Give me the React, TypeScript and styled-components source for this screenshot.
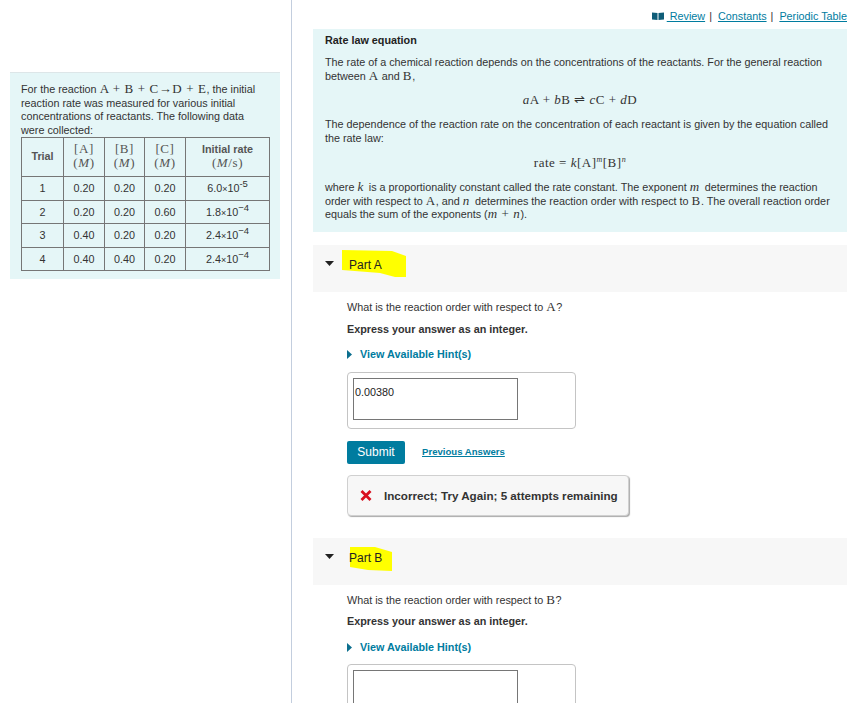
import styled, { createGlobalStyle } from "styled-components";

const teal = "#007c9f";

const GlobalStyle = createGlobalStyle`
  html, body {
    margin: 0;
    padding: 0;
    height: 703px;
    overflow: hidden;
    background: #fff;
    font-family: "Liberation Sans", Arial, sans-serif;
    color: #333;
  }
`;

const rows = [
  { trial: 1, a: "0.20", b: "0.20", c: "0.20", base: "6.0", exp: "-5", h: 24 },
  { trial: 2, a: "0.20", b: "0.20", c: "0.60", base: "1.8", exp: "−4", h: 23 },
  { trial: 3, a: "0.40", b: "0.20", c: "0.20", base: "2.4", exp: "−4", h: 24 },
  { trial: 4, a: "0.40", b: "0.40", c: "0.20", base: "2.4", exp: "−4", h: 23 },
];

function BookIcon() {
  return (
    <svg width="12" height="8" viewBox="0 0 12 8">
      <path d="M0 0.5 L5.5 1 V8 L0 7.5 Z M12 0.5 L6.5 1 V8 L12 7.5 Z" fill="#0f5d78" />
    </svg>
  );
}

function Caret() {
  return (
    <svg width="9" height="5" viewBox="0 0 9 5">
      <polygon points="0,0 9,0 4.5,5" fill="#222" />
    </svg>
  );
}

function HintCaret() {
  return (
    <svg width="5" height="9" viewBox="0 0 5 9">
      <polygon points="0,0 5,4.5 0,9" fill="#0c6f8e" />
    </svg>
  );
}

function CrossIcon() {
  return (
    <svg width="12" height="11" viewBox="0 0 12 11">
      <path d="M1.5 1 L10.5 10 M10.5 1 L1.5 10" stroke="#d9101f" strokeWidth="2.8" fill="none" />
    </svg>
  );
}

const markers = {
  A: { left: -7, top: -5, w: 64, h: 27, points: "0,0 50,1 64,6 64,27 53,27 38,23 0,20" },
  B: { left: 1, top: -1, w: 42, h: 24, points: "0,0 25,0 42,5 42,24 18,23 0,20" },
};

function Part({ letter, value, open }: { letter: "A" | "B"; value?: string; open?: boolean }) {
  const m = markers[letter];
  return (
    <>
      <PartHeader>
        <Caret />
        <PartName>
          <Marker $left={m.left} $top={m.top} width={m.w} height={m.h} viewBox={`0 0 ${m.w} ${m.h}`}>
            <polygon points={m.points} fill="#ffff00" />
          </Marker>
          <PartLabel>Part {letter}</PartLabel>
        </PartName>
      </PartHeader>
      <PartBody $open={open}>
        <Question $open={open}>
          What is the reaction order with respect to <Mq>{letter}</Mq>?
        </Question>
        <Instruction $open={open}>Express your answer as an integer.</Instruction>
        <HintLink>
          <HintCaret />
          View Available Hint(s)
        </HintLink>
        <AnswerBox $open={open}>
          <AnswerInput>{value}</AnswerInput>
        </AnswerBox>
        {open && (
          <>
            <Actions>
              <SubmitButton>Submit</SubmitButton>
              <PreviousLink>Previous Answers</PreviousLink>
            </Actions>
            <Feedback>
              <CrossIcon />
              Incorrect; Try Again; 5 attempts remaining
            </Feedback>
          </>
        )}
      </PartBody>
    </>
  );
}

export default function App() {
  return (
    <Page>
      <GlobalStyle />
      <LeftColumn>
        <DataCard>
          <Intro>
            For the reaction <Mq>A + B + C→D + E</Mq>, the initial reaction rate was measured for various initial concentrations of reactants. The following data were collected:
          </Intro>
          <DataTable>
            <colgroup>
              <col width="42" />
              <col width="41" />
              <col width="40" />
              <col width="41" />
              <col width="84" />
            </colgroup>
            <thead>
              <tr>
                <HeadCell>Trial</HeadCell>
                <HeadCell><Mq>[A]</Mq><br /><Mq>(<i>M</i>)</Mq></HeadCell>
                <HeadCell><Mq>[B]</Mq><br /><Mq>(<i>M</i>)</Mq></HeadCell>
                <HeadCell><Mq>[C]</Mq><br /><Mq>(<i>M</i>)</Mq></HeadCell>
                <HeadCell>Initial rate<br /><Mq>(<i>M</i>/s)</Mq></HeadCell>
              </tr>
            </thead>
            <tbody>
              {rows.map((r) => (
                <tr key={r.trial} style={{ height: r.h }}>
                  <Cell>{r.trial}</Cell>
                  <Cell>{r.a}</Cell>
                  <Cell>{r.b}</Cell>
                  <Cell>{r.c}</Cell>
                  <Cell>
                    {r.base}<Times>×</Times>10<Exp>{r.exp}</Exp>
                  </Cell>
                </tr>
              ))}
            </tbody>
          </DataTable>
        </DataCard>
      </LeftColumn>
      <RightColumn>
        <TopLinks>
          <BookIcon />
          <TopLink>&nbsp;Review</TopLink>
          <Sep>|</Sep>
          <TopLink>Constants</TopLink>
          <Sep>|</Sep>
          <TopLink>Periodic Table</TopLink>
        </TopLinks>
        <InfoBox>
          <InfoTitle>Rate law equation</InfoTitle>
          <InfoText>
            The rate of a chemical reaction depends on the concentrations of the reactants. For the general reaction between <Mq>A</Mq> and <Mq>B</Mq>,
          </InfoText>
          <Equation>
            <i>a</i>A + <i>b</i>B ⇌ <i>c</i>C + <i>d</i>D
          </Equation>
          <InfoText>
            The dependence of the reaction rate on the concentration of each reactant is given by the equation called the rate law:
          </InfoText>
          <Equation>
            rate = <i>k</i>[A]<EqSup>m</EqSup>[B]<EqSup>n</EqSup>
          </Equation>
          <InfoText>
            where <MathVar>k</MathVar> is a proportionality constant called the rate constant. The exponent <MathVar>m</MathVar> determines the reaction order with respect to <Mq>A</Mq>, and <MathVar>n</MathVar> determines the reaction order with respect to <Mq>B</Mq>. The overall reaction order equals the sum of the exponents (<Mq><i>m</i> + <i>n</i></Mq>).
          </InfoText>
        </InfoBox>
        <Part letter="A" value="0.00380" open />
        <Part letter="B" />
      </RightColumn>
    </Page>
  );
}

const Page = styled.div`
  display: grid;
  grid-template-columns: 292px 1fr;
  height: 703px;
  overflow: hidden;
`;

const LeftColumn = styled.aside`
  border-right: 1px solid #c3cede;
  padding: 72px 11px 0 10px;
`;

const DataCard = styled.section`
  background: #e5f6f7;
  border-top: 1px solid #dde6e8;
  padding: 10px 11px 11px;
  height: 185px;
`;

const Intro = styled.p`
  margin: 0 0 -1px;
  width: 240px;
  font-size: 10.8px;
  line-height: 13.7px;
  color: #333;
`;

const Mq = styled.span`
  font-family: "Liberation Serif", "Times New Roman", serif;
  font-size: 13px;
  font-weight: 400;
  line-height: 0;
  letter-spacing: 0.6px;
`;

const MathVar = styled.i`
  font-family: "Liberation Serif", "Times New Roman", serif;
  font-size: 13px;
  line-height: 0;
  letter-spacing: 0.6px;
  margin-right: 2px;
`;

const DataTable = styled.table`
  border-collapse: collapse;
  table-layout: fixed;
  width: 248px;
  height: 130px;
  border: 1px solid #767676;
`;

const HeadCell = styled.th`
  border: 1px solid #767676;
  height: 36px;
  padding: 0 0 2px;
  font-size: 10.8px;
  line-height: 14px;
  font-weight: 700;
  text-align: center;
  color: #555;
`;

const Cell = styled.td`
  border: 1px solid #767676;
  padding: 0;
  font-size: 10.8px;
  text-align: center;
  color: #333;
`;

const Times = styled.span`
  font-size: 9px;
`;

const Exp = styled.sup`
  font-size: 9.5px;
  line-height: 0;
`;

const RightColumn = styled.main`
  padding: 7px 8px 0 21px;
  min-width: 0;
`;

const TopLinks = styled.nav`
  display: flex;
  justify-content: flex-end;
  align-items: center;
  height: 18px;
  margin-bottom: 4px;
  font-size: 10.8px;
  color: #333;
`;

const TopLink = styled.a`
  color: ${teal};
  text-decoration: underline;
  margin-left: 3px;
`;

const Sep = styled.span`
  margin: 0 3px 0 4px;
`;

const InfoBox = styled.section`
  background: #e5f6f7;
  padding: 4px 12px 0;
  height: 203px;
  box-sizing: border-box;
`;

const InfoTitle = styled.h2`
  margin: 0 0 9px;
  font-size: 10.8px;
  line-height: 14px;
  font-weight: 700;
  color: #222;
`;

const InfoText = styled.p`
  margin: 0;
  font-size: 10.8px;
  line-height: 13.7px;
  color: #333;
`;

const Equation = styled.div`
  font-family: "Liberation Serif", "Times New Roman", serif;
  font-size: 13px;
  letter-spacing: 0.5px;
  line-height: 15px;
  text-align: center;
  margin: 9px 0 11px;
  color: #333;
`;

const EqSup = styled.sup`
  font-size: 8px;
  font-style: italic;
  line-height: 0;
`;

const PartHeader = styled.div`
  display: flex;
  align-items: center;
  gap: 15px;
  height: 47px;
  box-sizing: border-box;
  margin-top: 13px;
  padding: 0 0 10px 12px;
  background: #f7f7f7;
`;

const PartName = styled.div`
  position: relative;
`;

const Marker = styled.svg<{ $left: number; $top: number }>`
  position: absolute;
  left: ${({ $left }) => $left}px;
  top: ${({ $top }) => $top}px;
`;

const PartLabel = styled.span`
  position: relative;
  font-size: 12px;
  color: #222;
`;

const PartBody = styled.div<{ $open?: boolean }>`
  padding: 8px 0 0 34px;
  margin-bottom: ${({ $open }) => ($open ? "22px" : "0")};
`;

const Question = styled.p<{ $open?: boolean }>`
  margin: 0 0 ${({ $open }) => ($open ? "8px" : "7px")};
  font-size: 10.8px;
  line-height: 14px;
  color: #333;
`;

const Instruction = styled.p<{ $open?: boolean }>`
  margin: 0 0 ${({ $open }) => ($open ? "11px" : "12px")};
  font-size: 10.8px;
  line-height: 14px;
  font-weight: 700;
  color: #333;
`;

const HintLink = styled.a`
  display: flex;
  align-items: center;
  gap: 8px;
  height: 14px;
  font-size: 10.8px;
  font-weight: 700;
  color: ${teal};
`;

const AnswerBox = styled.div<{ $open?: boolean }>`
  width: 229px;
  height: 57px;
  box-sizing: border-box;
  margin-top: ${({ $open }) => ($open ? "11px" : "10px")};
  padding: 5px 0 0 5px;
  border: 1px solid #c4c4c4;
  border-radius: 4px;
  background: #fff;
`;

const AnswerInput = styled.div`
  width: 165px;
  height: 42px;
  box-sizing: border-box;
  padding: 7px 1px;
  border: 1px solid #767676;
  font-size: 10.8px;
  line-height: 12px;
  color: #222;
`;

const Actions = styled.div`
  display: flex;
  align-items: center;
  gap: 17px;
  margin-top: 12px;
`;

const SubmitButton = styled.button`
  width: 58px;
  height: 23px;
  padding: 0 0 2px;
  border: none;
  border-radius: 2px;
  background: ${teal};
  color: #fff;
  font-family: inherit;
  font-size: 12px;
`;

const PreviousLink = styled.a`
  padding-bottom: 2px;
  font-size: 9.6px;
  font-weight: 700;
  color: ${teal};
  text-decoration: underline;
`;

const Feedback = styled.div`
  display: flex;
  align-items: center;
  gap: 12px;
  width: 282px;
  height: 41px;
  box-sizing: border-box;
  margin-top: 11px;
  padding-left: 12px;
  border: 1px solid #d0d0d0;
  border-radius: 4px;
  background: #f7f7f7;
  box-shadow: 1px 1px 1px #aaa;
  font-size: 11.65px;
  font-weight: 700;
  color: #333;
  white-space: nowrap;
`;
